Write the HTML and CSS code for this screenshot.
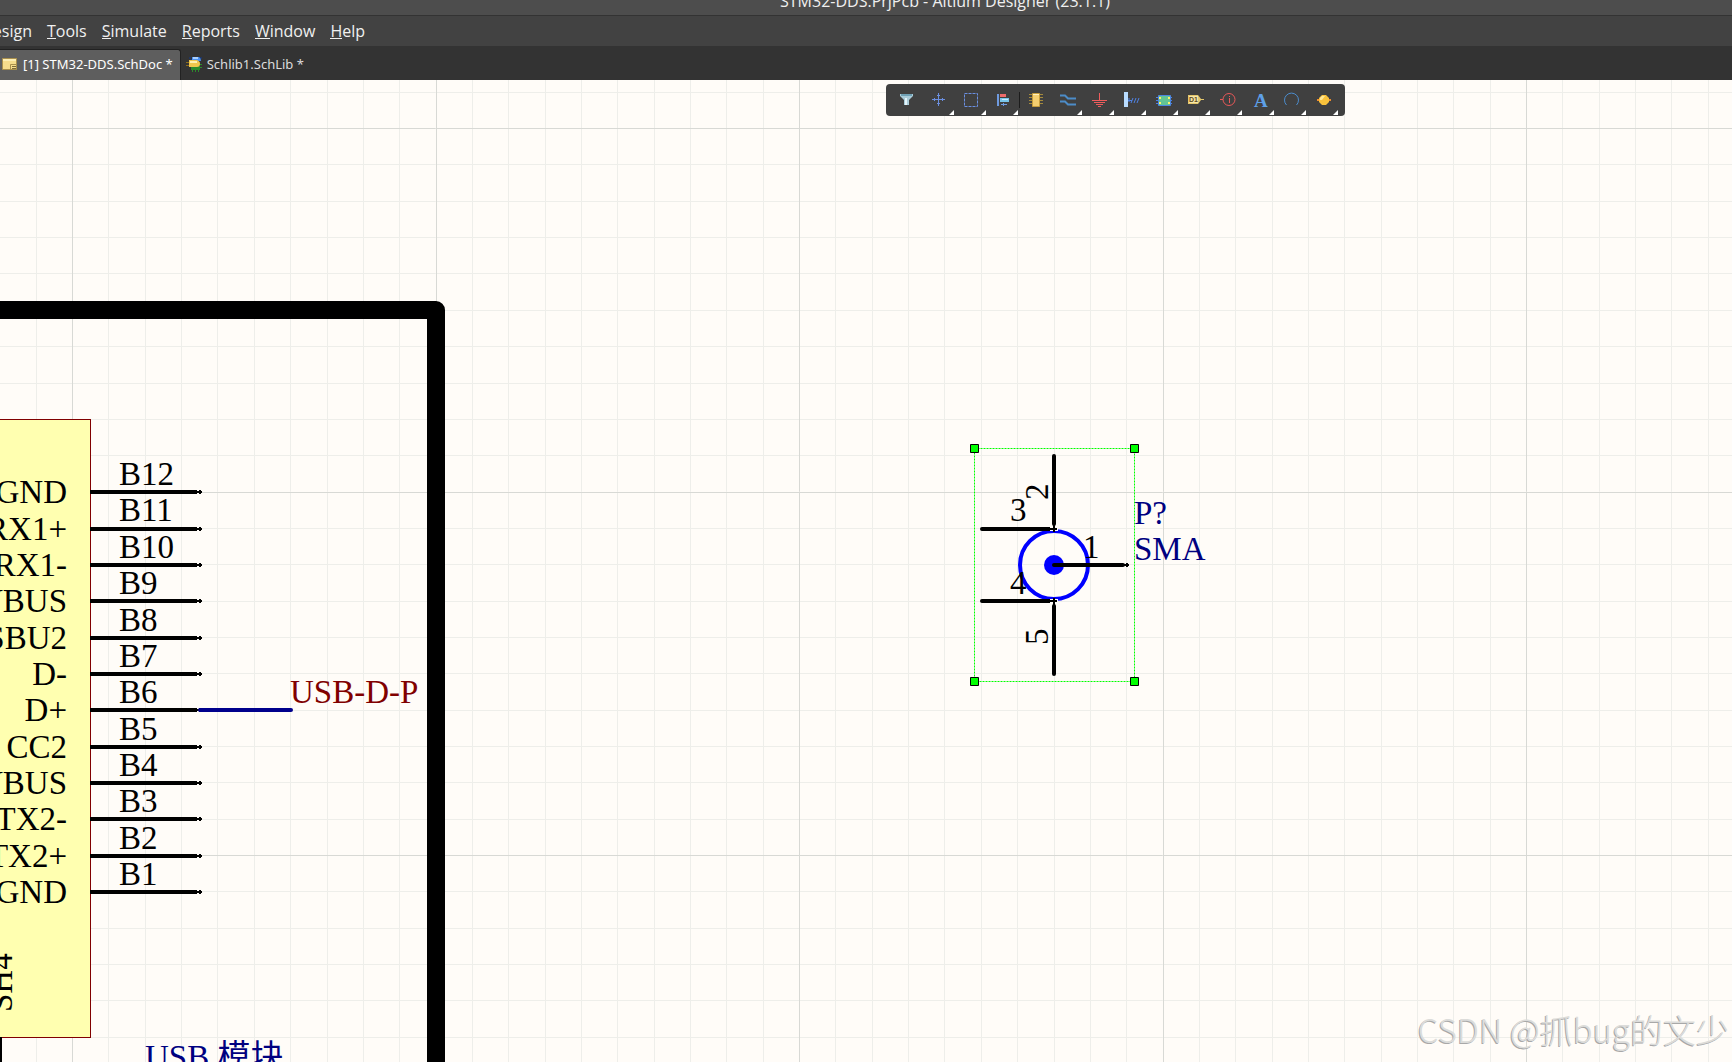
FILE: index.html
```html
<!DOCTYPE html>
<html lang="en">
<head>
<meta charset="utf-8">
<title>STM32-DDS.PrjPcb - Altium Designer (23.1.1)</title>
<link rel="stylesheet" href="styles.css">
</head>
<body>
<div class="app">
  <header class="titlebar"><span class="title">STM32-DDS.PrjPcb - Altium Designer (23.1.1)</span></header>

  <nav class="menubar" aria-label="Main menu">
    <button class="menu">De<span>sign</span></button>
    <button class="menu"><u>T</u>ools</button>
    <button class="menu"><u>S</u>imulate</button>
    <button class="menu"><u>R</u>eports</button>
    <button class="menu"><u>W</u>indow</button>
    <button class="menu"><u>H</u>elp</button>
  </nav>

  <div class="tabs" role="tablist">
    <button class="tab active" role="tab" aria-selected="true">
      <svg class="tab-icon" width="16" height="16" viewBox="0 0 16 16"><path d="M.5 2.500h14v11H.5z" fill="#f6dc8c" stroke="#a98f4c"/><path d="M1 3h13v2H1z" fill="#fdeeb4"/><path d="M8.500 13V8.500H14" fill="none" stroke="#a98f4c"/><path d="M10 10.500h4M10 12.500h4" stroke="#7d6a3a"/></svg>
      <span>[1] STM32-DDS.SchDoc *</span>
    </button>
    <button class="tab" role="tab" aria-selected="false">
      <svg class="tab-icon" width="16" height="16" viewBox="0 0 16 16"><path d="M3 2h2M13 2h3M4 4h2" stroke="#10398e"/><path d="M6 1h7q2 1 2 4H6z" fill="#4a90f0"/><path d="M7 1h5v2H7z" fill="#a9d0ff"/><path d="M5 10h9v4H5zM6 14h1v2H6zM9 14h1v2H9zM12 14h1v2h-1zM14 8h2v1h-2zM14 11h2v1h-2z" fill="#2c8a2c"/><path d="M0 6.500h14M0 9.500h13" stroke="#8d6d1c"/><path d="M3 4h8q3 1 3 4t-3 3H3z" fill="#f0c64e"/><path d="M4 5h7v2H4z" fill="#fff0b0"/></svg>
      <span>Schlib1.SchLib *</span>
    </button>
  </div>

  <main class="canvas">
    <svg class="sheet" width="100%" height="100%" role="img" aria-label="Schematic sheet">
      <defs>
        <pattern id="grid" x="72" y="48" width="727" height="727" patternUnits="userSpaceOnUse">
          <path class="minor" d="M36.500 0v727M73.500 0v727M109.500 0v727M145.500 0v727M182.500 0v727M218.500 0v727M255.500 0v727M291.500 0v727M327.500 0v727M400.500 0v727M436.500 0v727M473.500 0v727M509.500 0v727M545.500 0v727M582.500 0v727M618.500 0v727M654.500 0v727M691.500 0v727M0 36.500h727M0 73.500h727M0 109.500h727M0 145.500h727M0 182.500h727M0 218.500h727M0 255.500h727M0 291.500h727M0 327.500h727M0 400.500h727M0 436.500h727M0 473.500h727M0 509.500h727M0 545.500h727M0 582.500h727M0 618.500h727M0 654.500h727M0 691.500h727"/>
          <path class="major" d="M.5 0v727M364.500 0v727M0 .5h727M0 364.500h727"/>
        </pattern>
        <g id="pin"><path class="lead" d="M90 0H197"/><path class="tip" d="M197 0h5M200 -2v4"/></g>
      </defs>
      <rect width="100%" height="100%" fill="url(#grid)"/>

      <!-- module outline -->
      <path class="outline" d="M-20 230H436V1400"/>

      <!-- USB connector -->
      <rect class="body" x="-60" y="339" width="150" height="618" transform="translate(.5 .5)"/>
      <path class="lead" d="M0 957v200"/>
      <g>
        <use href="#pin" y="412"/><use href="#pin" y="449"/><use href="#pin" y="485"/><use href="#pin" y="521"/>
        <use href="#pin" y="558"/><use href="#pin" y="594"/><use href="#pin" y="630"/><use href="#pin" y="667"/>
        <use href="#pin" y="703"/><use href="#pin" y="739"/><use href="#pin" y="776"/><use href="#pin" y="812"/>
      </g>
      <g class="label">
        <text x="119" y="405">B12</text><text x="119" y="441">B11</text><text x="119" y="478">B10</text>
        <text x="119" y="514">B9</text><text x="119" y="551">B8</text><text x="119" y="587">B7</text>
        <text x="119" y="623">B6</text><text x="119" y="660">B5</text><text x="119" y="696">B4</text>
        <text x="119" y="732">B3</text><text x="119" y="769">B2</text><text x="119" y="805">B1</text>
      </g>
      <g class="label end">
        <text x="67" y="423">GND</text><text x="67" y="460">RX1+</text><text x="67" y="496">RX1-</text>
        <text x="67" y="532">VBUS</text><text x="67" y="569">SBU2</text><text x="67" y="605">D-</text>
        <text x="67" y="641">D+</text><text x="67" y="678">CC2</text><text x="67" y="714">VBUS</text>
        <text x="67" y="750">TX2-</text><text x="67" y="787">TX2+</text><text x="67" y="823">GND</text>
      </g>
      <text class="label" transform="translate(12 932) rotate(-90)">SH4</text>
      <path class="wire" d="M200 630H291"/>
      <text class="label net" x="290" y="623">USB-D-P</text>
      <text class="label note" x="145" y="988">USB 模块</text>

      <!-- SMA connector -->
      <circle class="ring" cx="1054" cy="485" r="34"/>
      <circle cx="1054" cy="485" r="10" fill="#00f"/>
      <path class="lead round" d="M1054 485H1123M982 449H1050M982 521H1050M1054 376V444M1054 526V594"/>
      <path d="M1050 447h8v4h-8zM1050 519h8v4h-8z" fill="#fffcf8"/>
      <path class="tip" d="M1123 485h6M1127 483v4M1050 449h7M1054 443v9M1050 521h7M1054 518v9"/>
      <g class="label">
        <text x="1083" y="478">1</text><text x="1010" y="441">3</text><text x="1010" y="514">4</text>
        <text transform="translate(1048 420) rotate(-90)">2</text>
        <text transform="translate(1048 565) rotate(-90)">5</text>
      </g>
      <text class="label note" x="1134" y="444">P?</text>
      <text class="label note" x="1134" y="480">SMA</text>
      <path class="selection" d="M974.500 368.500h160v233h-160z"/>
      <path class="handle" d="M970.500 364.500h8v8h-8zM1130.500 364.500h8v8h-8zM970.500 597.500h8v8h-8zM1130.500 597.500h8v8h-8z"/>
    </svg>

    <div class="toolbar" role="toolbar" aria-label="Active bar">
      <button class="tool" aria-label="Selection filter"><svg viewBox="0 0 32 31"><path d="M10 10h13v2l-4 4v5h-5v-5l-4-4z" fill="#a9cbd8"/><path d="M11 10h11v2H11z" fill="#6fa0b4"/><path d="M15 14h2v7h-2z" fill="#e4f4fa"/></svg></button>
      <button class="tool more" aria-label="Move"><svg viewBox="0 0 32 31"><path d="M10 15.500h13M16.500 9v13M12.500 14v3M20.500 14v3M15 11.500h3M15 19.500h3" stroke="#6b8fe0" fill="none"/></svg></button>
      <button class="tool more" aria-label="Select area"><svg viewBox="0 0 32 31"><path d="M10.500 9.500h13v13h-13z" stroke="#6b8fe0" stroke-dasharray="3 1" fill="none"/></svg></button>
      <button class="tool more" aria-label="Align"><svg viewBox="0 0 32 31"><path d="M11 10h2v12h-2z" fill="#6f9be0"/><path d="M14 10h6v3h-6z" fill="#ee6b6b"/><path d="M14 14h9v4h-9z" fill="#79c5ea"/><path d="M16 15h6v1h-6z" fill="#c5ecff"/><path d="M15 20.500h6M17.500 19v3" stroke="#6f9be0"/></svg></button>
      <button class="tool split" aria-label="Place part"><svg viewBox="0 0 32 31"><path d="M11 10.500h14M11 13.500h14M11 16.500h14M11 19.500h14" stroke="#a58a3c"/><path d="M14.500 9.500h7v13h-7z" fill="#f5cf70" stroke="#c79d3c"/><path d="M15 10h6v1h-6z" fill="#fff0bd"/></svg></button>
      <button class="tool more" aria-label="Place wire"><svg viewBox="0 0 32 31"><path d="M10 11.500h5l3 3h8M10 17.500h5l3 3h8" stroke="#4c8cc8" stroke-width="2" fill="none"/></svg></button>
      <button class="tool more" aria-label="Place ground"><svg viewBox="0 0 32 31"><path d="M17.500 9v7M10 16.500h15M12 18.500h11M14 20.500h7M16 22.500h3" stroke="#ee5c5c"/></svg></button>
      <button class="tool more" aria-label="Place harness"><svg viewBox="0 0 32 31"><path d="M10 8h4v15h-4z" fill="#b9dcff"/><path d="M14 16.500h4M15 14v4M17 19l2-5M20 19l2-5M23 19l2-5" stroke="#4f82e4" fill="none"/></svg></button>
      <button class="tool more" aria-label="Place sheet symbol"><svg viewBox="0 0 32 31"><path d="M10 13.500h16M10 16.500h16M10 19.500h16" stroke="#4c7fe0"/><path d="M12.500 11.500h12v10h-12z" fill="#63c493" stroke="#4c86e0"/><path d="M13 13h2v2h-2zM13 18h2v2h-2zM22 13h2v2h-2zM22 18h2v2h-2z" fill="#fff06a"/></svg></button>
      <button class="tool more" aria-label="Place port"><svg viewBox="0 0 32 31"><path d="M10 11h10l3 4h3v1h-3l-3 4H10z" fill="#e4c76c"/><path d="M11 12h9v7h-9z" fill="#f7e6a6"/><text class="port" x="11" y="18">D1</text></svg></button>
      <button class="tool more" aria-label="Place directive"><svg viewBox="0 0 32 31"><circle cx="19" cy="15.500" r="6" stroke="#e85858" fill="none"/><path d="M10 15.500h3M19.500 12v1M19.500 14v5" stroke="#e85858"/></svg></button>
      <button class="tool more" aria-label="Place text"><svg viewBox="0 0 32 31"><text class="letter" x="12" y="23">A</text></svg></button>
      <button class="tool more" aria-label="Place arc"><svg viewBox="0 0 32 31"><path d="M12.500 21a7 7 0 1 1 10 0" stroke="#4c8ccc" fill="none"/></svg></button>
      <button class="tool more" aria-label="Place junction"><svg viewBox="0 0 32 31"><path d="M11 16h14" stroke="#ee8c2e" stroke-width="2"/><path d="M16 11h4l3 3v4l-3 3h-4l-3-3v-4z" fill="#f9c23c"/><path d="M16 12h3l-3 4h-2v-2z" fill="#ffe795"/></svg></button>
    </div>

    <div class="watermark">CSDN @抓bug的文少</div>
  </main>
</div>
</body>
</html>
```
FILE: styles.css
```css
* { box-sizing: border-box; }

body {
  margin: 0;
  font-family: "Open Sans", "Noto Sans", "Noto Sans CJK SC", sans-serif;
  color: #f0f0f0;
}

button {
  border: 0;
  margin: 0;
  padding: 0;
  background: none;
  color: inherit;
  font: inherit;
}

.app {
  display: flex;
  flex-direction: column;
  height: 100vh;
  overflow: hidden;
}

/* title, menu and document tabs */
.titlebar {
  display: flex;
  flex: none;
  align-items: flex-end;
  justify-content: center;
  height: 16px;
  padding: 0 0 4px 158px;
  overflow: hidden;
  background: #4d4d4d;
  border-bottom: 1px solid #333;
}

.title {
  font-size: 16px;
  line-height: 20px;
  white-space: nowrap;
}

.menubar {
  display: flex;
  flex: none;
  gap: 15px;
  height: 30px;
  background: #424242;
}

.menu {
  font-size: 16px;
  line-height: 30px;
}

.menu u {
  display: inline-block;
  height: 18px;
  line-height: 20px;
  text-decoration: none;
  border-bottom: 1px solid #f0f0f0;
}

.menu:first-child { display: flex; justify-content: flex-end; width: 32px; }

.tabs {
  display: flex;
  flex: none;
  height: 34px;
  padding-top: 3px;
  background: #333;
}

.tab {
  display: flex;
  align-items: center;
  gap: 5px;
  padding: 0 5px 2px;
  font-family: "Noto Sans", sans-serif;
  font-size: 13px;
  white-space: nowrap;
  color: #dcdcdc;
}

.tab.active {
  padding: 0 7px 2px 2px;
  border: 1px solid #222;
  border-width: 1px 1px 0 0;
  border-radius: 0 3px 0 0;
  background: #5e5e5e;
  color: #fff;
}

/* drawing area */
.canvas {
  position: relative;
  flex: 1;
  min-height: 0;
  overflow: hidden;
  background: #fffcf8;
}

.sheet { display: block; }
.minor { stroke: #eeeeea; }
.major { stroke: #d8d9d5; }

.outline {
  fill: none;
  stroke: #000;
  stroke-width: 18;
  stroke-linejoin: round;
}

.body { fill: #ffffb0; stroke: #800000; }
.lead { fill: none; stroke: #000; stroke-width: 4; }
.round { stroke-linecap: round; }
.tip { stroke: #000; stroke-width: 2; }
.wire { stroke: #00008c; stroke-width: 4; stroke-linecap: round; }
.ring { fill: none; stroke: #00f; stroke-width: 4; }

.label {
  font-family: "Liberation Serif", "Noto Sans CJK SC", serif;
  font-size: 33px;
  fill: #000;
}

.end { text-anchor: end; }
.net { fill: #800000; }
.note { fill: #000080; }
.selection { fill: none; stroke: #0f0; stroke-dasharray: 2 1; }
.handle { fill: #0f0; stroke: #000; }

/* floating tool bar */
.toolbar {
  position: absolute;
  top: 4px;
  left: 886px;
  display: flex;
  padding: 0 7px 1px 4px;
  border-radius: 4px;
  background: #404040;
}

.tool {
  position: relative;
  width: 32px;
  height: 31px;
}

.tool svg { display: block; width: 32px; height: 31px; }

.more::after {
  content: "";
  position: absolute;
  right: 0;
  bottom: 0;
  width: 5px;
  height: 5px;
  background: #fff;
  clip-path: polygon(100% 0, 100% 100%, 0 100%);
}

.split::before {
  content: "";
  position: absolute;
  left: 1px;
  top: 8px;
  width: 1px;
  height: 16px;
  background: #1c1c1c;
}

.letter { font: bold 19px "Liberation Serif", serif; fill: #5ea0e8; }
.port { font: bold 7px "Liberation Sans", sans-serif; fill: #5c4a1c; }

.watermark {
  position: absolute;
  right: 3px;
  bottom: 9px;
  font: 300 33px/48px "Noto Sans CJK SC", sans-serif;
  color: #dcdcda;
  text-shadow: -1px 1px 0 #a8a8a8;
}
```
